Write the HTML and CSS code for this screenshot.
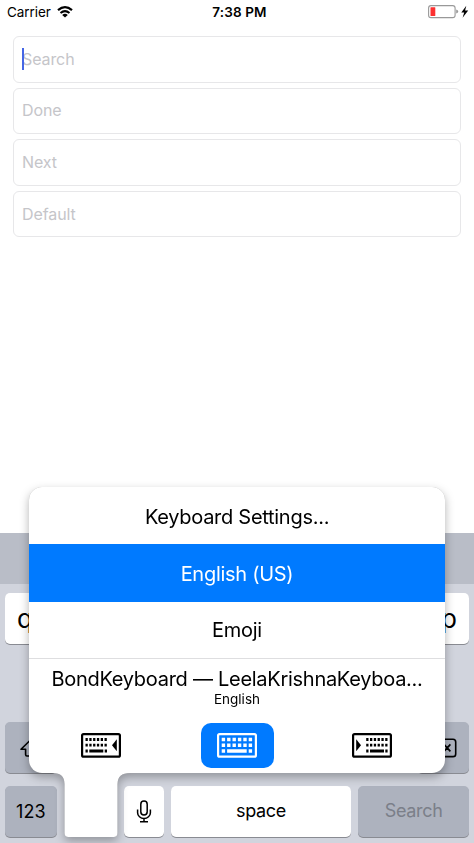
FILE: index.html
```html
<!DOCTYPE html>
<html lang="en">
<head>
<meta charset="utf-8">
<title>Keyboard</title>
<link rel="stylesheet" href="styles.css">
</head>
<body>
<div class="screen">
  <header class="status">
    <div class="carrier"><span>Carrier</span>
      <svg class="wifi" width="16" height="12" viewBox="0 0 16 12"><path d="M1 4.2Q8-1.8 15 4.2" fill="none" stroke="#000" stroke-width="2.2"/><path d="M3.5 7Q8 3.2 12.5 7" fill="none" stroke="#000" stroke-width="2"/><path d="M8 11.6 5.2 8.9Q8 6.8 10.8 8.9Z"/></svg>
    </div>
    <div class="time">7:38 PM</div>
    <div class="power">
      <svg width="42" height="14" viewBox="0 0 42 14"><rect x=".6" y=".6" width="26.5" height="12" rx="2.4" fill="#fff" stroke="#999" stroke-width="1.1"/><rect x="2.5" y="2.3" width="4.8" height="8.7" rx=".5" fill="#fc3030"/><path d="M28.2 4.6q2 .3 2 2t-2 2z" fill="#999"/><path d="M38.3.8 33.3 7.6h2.9L34.6 12.8l5.6-7.3h-3.1z"/></svg>
    </div>
  </header>
  <main class="fields">
    <div class="field"><i class="caret"></i>Search</div>
    <div class="field">Done</div>
    <div class="field">Next</div>
    <div class="field">Default</div>
  </main>
  <section class="keyboard">
    <div class="suggestions"></div>
    <div class="keys">
      <div class="row"><div class="key letter">q</div><div class="key letter">p</div></div>
      <div class="row home"></div>
      <div class="row third">
        <div class="key dark shift"><svg width="24" height="20" viewBox="0 0 24 20"><path d="M12 1.5 2 11.2h4.6v5.4q0 1.4 1.4 1.4h8q1.4 0 1.4-1.4v-5.4H22z" fill="none" stroke="#000" stroke-width="1.6" stroke-linejoin="round"/></svg></div>
        <div class="key dark shift"><svg width="27" height="20" viewBox="0 0 27 20"><path d="M9.5 1.2H23q2.7 0 2.7 2.7v12q0 2.7-2.7 2.7H9.5L1 10zM14 6.4l6.4 7M20.4 6.4l-6.4 7" fill="none" stroke="#000" stroke-width="1.6" stroke-linejoin="round"/></svg></div>
      </div>
      <div class="row bottom">
        <div class="key dark numbers">123</div>
        <div class="gap"></div>
        <div class="key mic"><svg width="16" height="24" viewBox="0 0 16 24"><rect x="4.8" y="1" width="6.4" height="14" rx="3.2" fill="none" stroke="#000" stroke-width="1.5"/><path d="M1.6 9.5v3.2a6.4 5.8 0 0 0 12.8 0V9.5M8 18.5v3M4 21.7h8" fill="none" stroke="#000" stroke-width="1.5"/></svg></div>
        <div class="key space">space</div>
        <div class="key dark search">Search</div>
      </div>
    </div>
  </section>
  <div class="popup">
    <div class="panel">
      <div class="item"><span class="settings">Keyboard Settings...</span></div>
      <div class="item selected"><span class="us">English (US)</span></div>
      <div class="item"><span class="emoji">Emoji</span></div>
      <div class="item bond"><span class="long">BondKeyboard — LeelaKrishnaKeyboa...</span><small>English</small></div>
      <div class="docks">
        <div class="dock"><svg width="40" height="25" viewBox="0 0 40 25"><rect x="1.1" y="1.1" width="37.8" height="22.6" rx="1.5" fill="none" stroke="#000" stroke-width="2.2"/><path d="M4.5 6.5H26M4.5 12.2H26" stroke="#000" stroke-width="2.8" stroke-dasharray="2.3 1.5"/><path d="M4.5 18h2.3M8.3 18h14M23.7 18H26" stroke="#000" stroke-width="2.8"/><path d="M35.8 6.3v12L31 12.3z"/></svg></div>
        <div class="dock active"><svg width="40" height="25" viewBox="0 0 40 25"><rect x="1.1" y="1.1" width="37.8" height="22.6" rx="1.5" fill="none" stroke="#fff" stroke-width="2.2"/><path d="M4.7 6.5h31M4.7 12.2h31" stroke="#fff" stroke-width="3.4" stroke-dasharray="3.4 2"/><path d="M4.7 18h3.4M10.1 18h19.6M31.7 18h3.4" stroke="#fff" stroke-width="3.4"/></svg></div>
        <div class="dock"><svg width="40" height="25" viewBox="0 0 40 25"><rect x="1.1" y="1.1" width="37.8" height="22.6" rx="1.5" fill="none" stroke="#000" stroke-width="2.2"/><path d="M14.2 6.5H36M14.2 12.2H36" stroke="#000" stroke-width="2.8" stroke-dasharray="2.3 1.5"/><path d="M14.2 18h2.3M18 18h14M33.3 18h2.3" stroke="#000" stroke-width="2.8"/><path d="M4.2 6.3v12L9 12.3z"/></svg></div>
      </div>
    </div>
    <svg class="stem" width="86" height="66" viewBox="0 0 86 66"><path d="M0 0H86V1Q73.5 1 73.5 12V61Q73.5 65 69.5 65H24.5Q20.5 65 20.5 61V12Q20.5 1 9 1H0Z" fill="#fff"/></svg>
  </div>
</div>
</body>
</html>
```
FILE: styles.css
```css
* { box-sizing: border-box; }
body { margin: 0; font-family: Inter, "Liberation Sans", sans-serif; color: #000; }
.screen { position: relative; width: 474px; height: 843px; overflow: hidden; background: #fff; display: flex; flex-direction: column; }
svg { display: block; flex: none; }
.status { height: 24px; padding: 0 4px 0 7px; display: grid; grid-template-columns: 1fr auto 1fr; align-items: center; font-size: 13.5px; }
.carrier { display: flex; align-items: center; gap: 6px; letter-spacing: -.05px; }
.time { font-weight: 600; font-size: 13.5px; letter-spacing: .15px; padding-left: 2px; }
.power { justify-self: end; }
.fields { padding: 12px 13px 0; display: flex; flex-direction: column; gap: 5px; flex: 1; }
.field { position: relative; height: 46.6px; border: 1px solid #e7e7e9; border-radius: 6px; padding: 0 0 1px 8px; display: flex; align-items: center; color: #c5c5c9; font-size: 16px; letter-spacing: -.1px; }
.caret { position: absolute; left: 8px; top: 11px; width: 2px; height: 22px; background: #4566e5; }
.keyboard { height: 310px; background: #d1d4dd; flex: none; }
.suggestions { height: 51px; background: #b9bdc7; }
.keys { padding: 9px 5px 0; }
.row { display: flex; justify-content: space-between; height: 52px; }
.home { margin-top: 12px; }
.third { margin-top: 13px; }
.bottom { margin-top: 12px; justify-content: flex-start; gap: 7px; }
.key { background: #fff; border-radius: 5px; box-shadow: 0 1px 0 #898b92; height: 51px; display: flex; align-items: center; justify-content: center; font-size: 18px; }
.dark { background: #adb2be; }
.letter { width: 40px; font-size: 26px; padding-bottom: 1px; }
.shift { width: 52px; }
.numbers { width: 52px; font-size: 18px; letter-spacing: .2px; }
.gap { width: 53px; }
.mic { width: 40px; }
.space { width: 181px; letter-spacing: -.35px; padding-bottom: 2px; }
.search { width: 111px; color: #7b7f89; padding-bottom: 2px; letter-spacing: -.3px; }
.popup { position: absolute; left: 29px; top: 487px; width: 416px; filter: drop-shadow(0 0 .5px rgba(0,0,0,.3)) drop-shadow(0 4px 5px rgba(0,0,0,.3)); }
.panel { height: 286px; background: #fff; border-radius: 13px; overflow: hidden; }
.stem { margin: -1px 0 0 15px; }
.item { height: 57px; display: flex; align-items: center; justify-content: center; font-size: 20px; padding-top: 2px; white-space: nowrap; }
.selected { background: #007aff; color: #fff; height: 57.5px; }
.selected + .item { height: 57.5px; padding-top: 0; }
.bond { flex-direction: column; border-top: 1px solid #dedee0; font-size: 20px; line-height: 23px; margin-top: -1px; padding-top: 1px; }
.bond small { font-size: 13.5px; line-height: 17px; }
.settings, .us, .emoji, .long { letter-spacing: -.28px; }
.docks { display: grid; grid-template-columns: 1fr 73px 1fr; align-items: center; margin-top: 8px; }
.dock { height: 45px; display: flex; align-items: center; justify-content: center; }
.dock:first-child { padding-right: 27px; }
.dock:last-child { padding-left: 25px; }
.active { background: #007aff; border-radius: 10px; }
```
